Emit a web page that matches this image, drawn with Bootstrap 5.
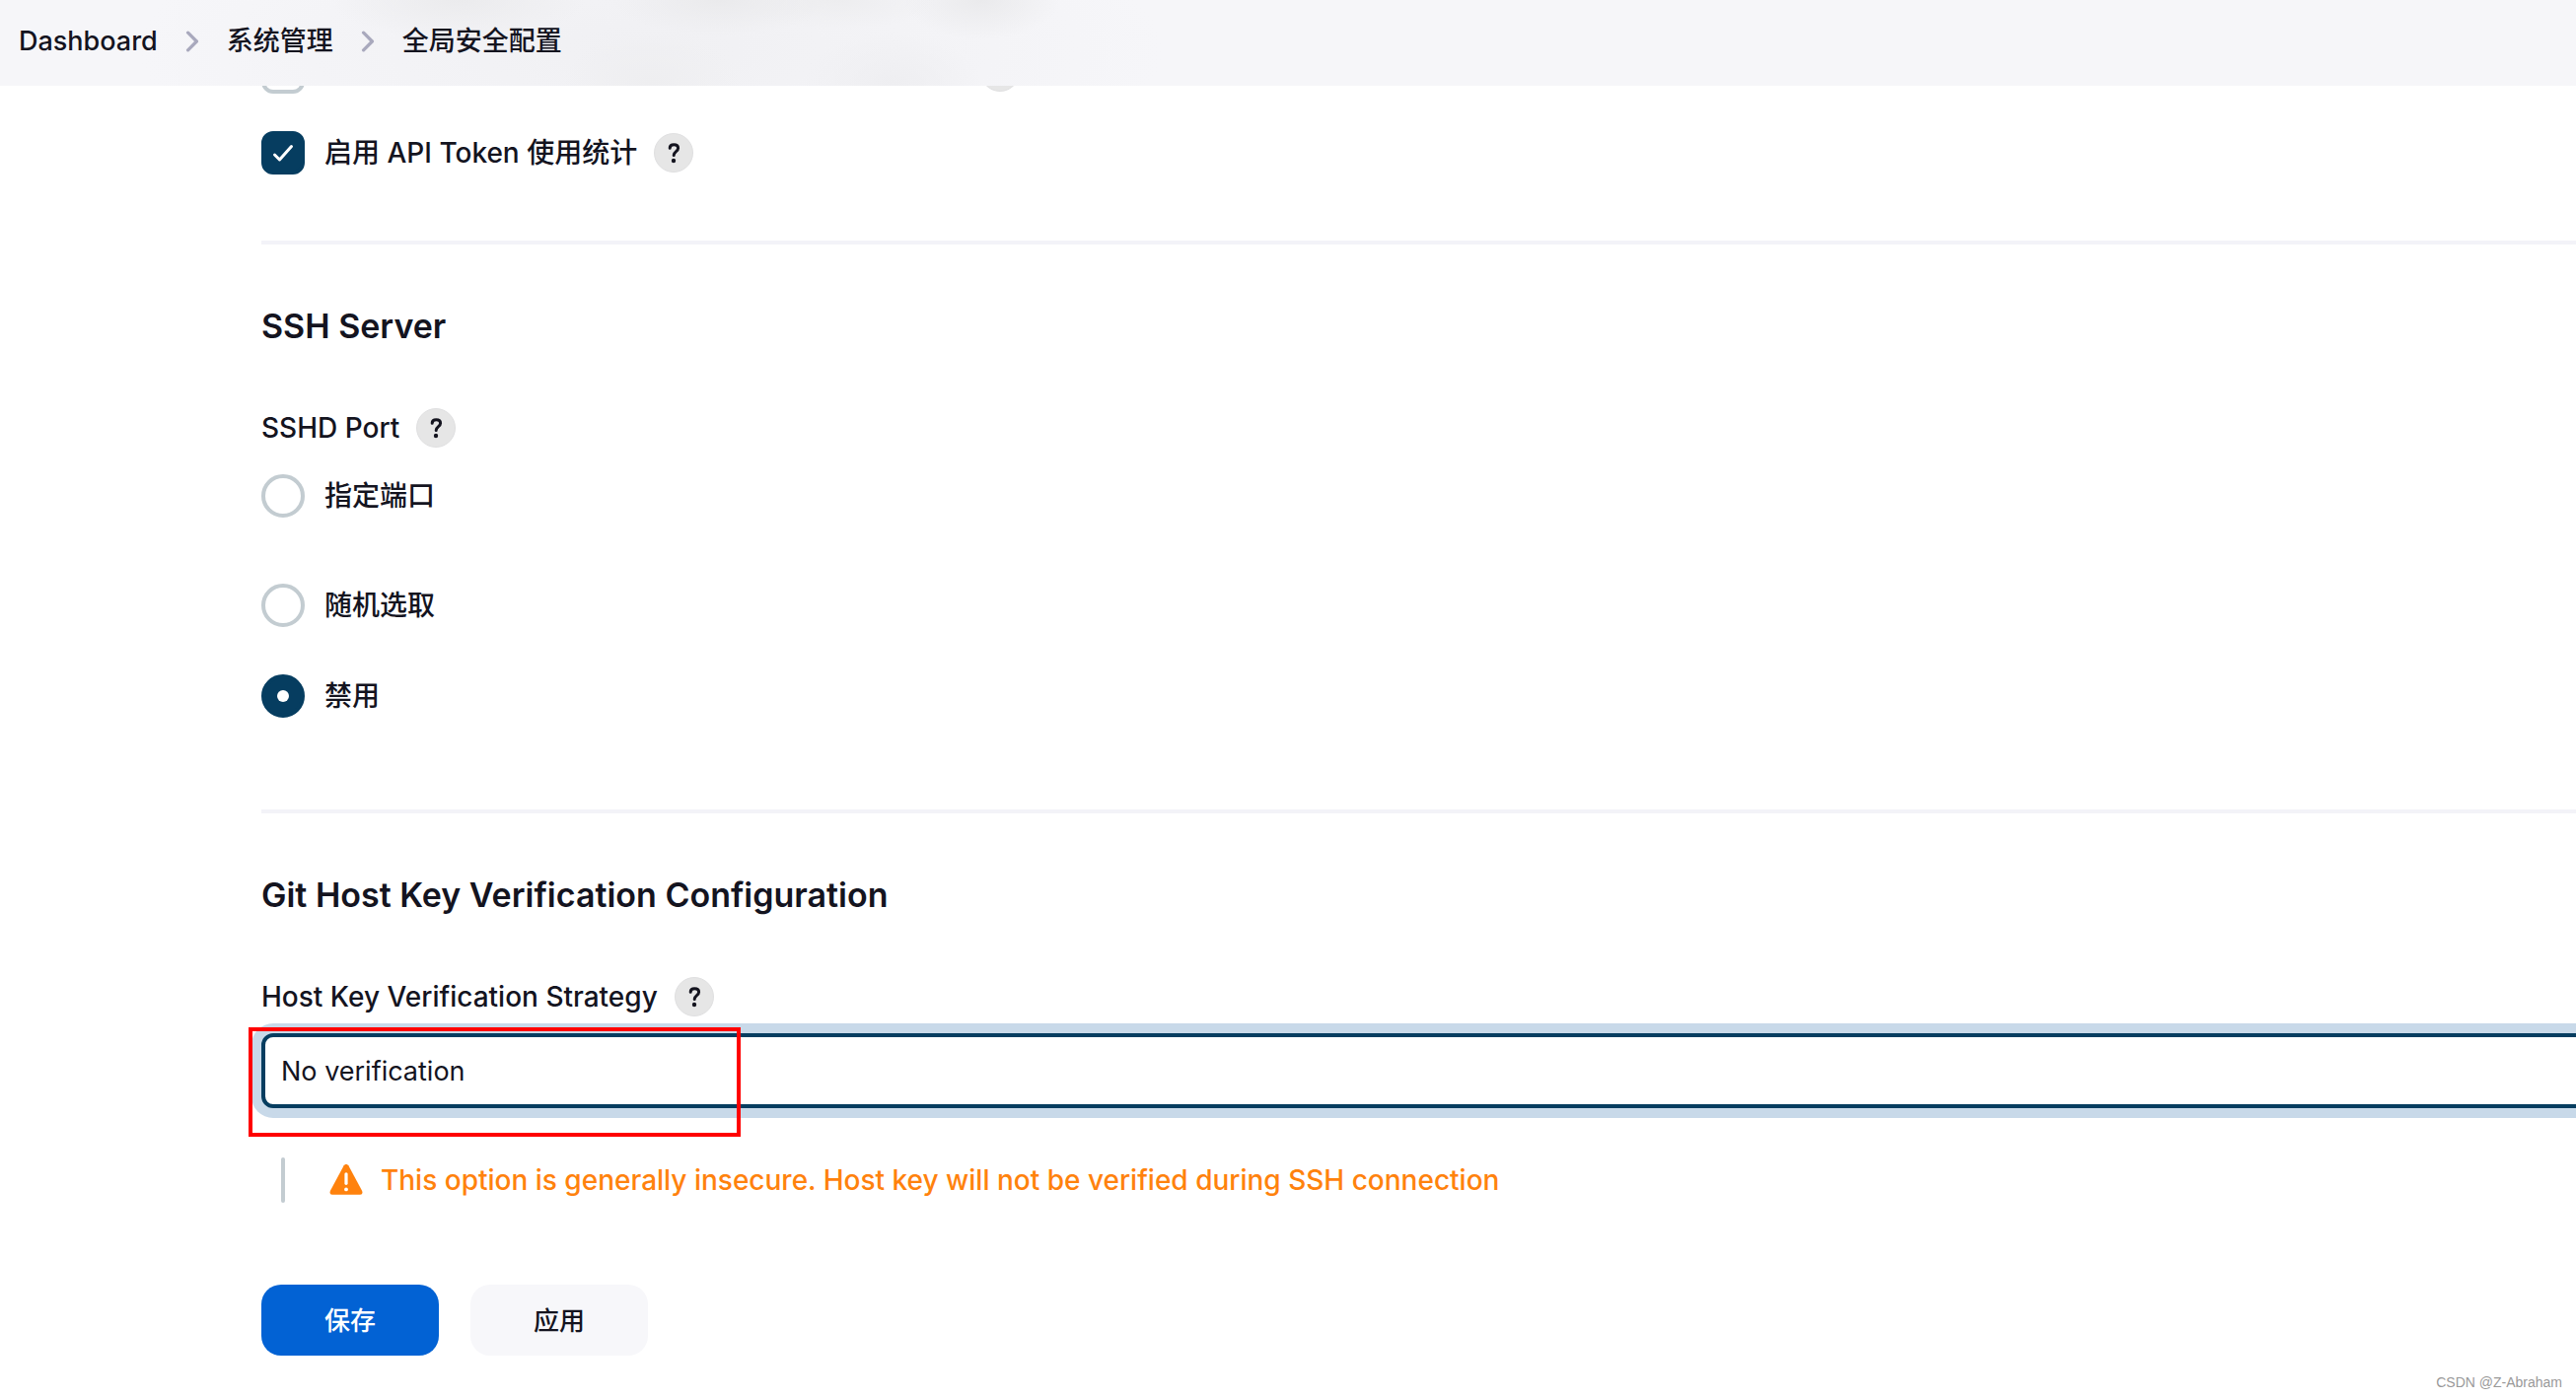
<!DOCTYPE html>
<html lang="zh-CN">
<head>
<meta charset="utf-8">
<meta name="viewport" content="width=device-width, initial-scale=1">
<title>全局安全配置</title>
<link rel="stylesheet" href="https://cdn.jsdelivr.net/npm/bootstrap@5.3.0/dist/css/bootstrap.min.css">
<style>
:root { --ink: #14141f; --accent: #063d60; --line: #c3ccd1; }
body { font-family: Inter, "Noto Sans CJK SC", sans-serif; font-size: 28px; line-height: 40px; font-weight: 500; color: var(--ink); background: #fff; overflow-x: hidden; }
.topbar { height: 87px; padding: 0 19px 3px; font-size: 27px; background:
  radial-gradient(ellipse 130px 40px at 465px 0, #ebebed, transparent),
  radial-gradient(ellipse 110px 36px at 730px 0, #eaeaec, transparent),
  radial-gradient(ellipse 100px 30px at 850px 0, #ededef, transparent),
  radial-gradient(ellipse 80px 40px at 995px 0, #eaeaec, transparent),
  radial-gradient(ellipse 90px 50px at 660px 84px, #eeeef0, transparent),
  radial-gradient(ellipse 90px 50px at 905px 84px, #eeeef1, transparent),
  radial-gradient(ellipse 520px 160px at 660px 50px, #f0f0f3, transparent), #f6f6f9; }
.crumbs { gap: 28px; }
.crumbs a { color: inherit; text-decoration: none; }
.settings { padding: 51px 0 30px 265px; }
.opt-row { height: 44px; gap: 20px; }
.opt-row .form-check-input { width: 44px; height: 44px; margin: 0; border: 4px solid var(--line); flex: none; }
.opt-row .form-check-input[type=checkbox] { border-radius: 12px; }
.opt-row .form-check-input:checked { background-color: var(--accent); border-color: var(--accent); background-size: 44px 44px; background-position: center; }
.opt-row .form-check-input:checked[type=checkbox] { background-image: url("data:image/svg+xml,%3csvg xmlns='http://www.w3.org/2000/svg' viewBox='0 0 44 44'%3e%3cpath d='M13.500 24l5 5L30.500 15.500' fill='none' stroke='%23fff' stroke-width='3' stroke-linecap='round' stroke-linejoin='round'/%3e%3c/svg%3e"); }
.opt-row .form-check-input:checked[type=radio] { background-image: url("data:image/svg+xml,%3csvg xmlns='http://www.w3.org/2000/svg' viewBox='0 0 44 44'%3e%3ccircle cx='22' cy='22' r='6' fill='%23fff'/%3e%3c/svg%3e"); }
.help { width: 40px; height: 40px; padding: 0; border: 1px solid #e0e0e1; border-radius: 50%; background: #e6e6e6; color: var(--ink); flex: none; display: grid; place-content: center; }
.help svg { display: block; }
.under-bar { margin-left: 665px; }
.stats-row { margin-top: 38px; }
.rule { height: 4px; margin: 67px 0 0; border: 0; opacity: 1; background: #f3f3f8; }
.sec-title { font-size: 34px; line-height: 40px; font-weight: 600; margin: 63px 0 63px; }
.field-head { gap: 17px; }
.port-list { padding: 27px 0 26px; }
.port-fixed { margin-bottom: 67px; }
.port-random { margin-bottom: 48px; }
.strategy-box { margin-top: 17px; }
.strategy { appearance: none; width: calc(100% + 20px); height: 76px; padding: 2px 16px 0; border: 4px solid var(--accent); border-radius: 12px; box-shadow: 0 0 0 10px #c8d9e9; font-size: 27px; font-weight: 400; color: var(--ink); background: #fff; }
.callout { position: absolute; left: -13px; top: -6px; width: 499px; height: 111px; border: 4px solid red; pointer-events: none; }
.notice { margin: 50px 0 83px 20px; height: 46px; color: #ff820d; }
.notice .bar { width: 4px; height: 46px; border-radius: 2px; background: var(--line); margin-right: 44px; }
.notice svg { margin-right: 17px; }
.actions { gap: 32px; }
.act { width: 180px; height: 72px; border: 0; border-radius: 20px; font-size: 26px; font-weight: 500; }
.act-save, .act-save:hover { background: #0262d4; color: #fff; }
.act-apply, .act-apply:hover { background: #f7f7fa; color: var(--ink); }
.watermark { position: absolute; right: 14px; bottom: 6px; font: 14px/20px "Liberation Sans", sans-serif; color: #999; }
</style>
</head>
<body>
<svg class="d-none">
  <symbol id="q" viewBox="0 0 40 40"><path d="M16.200 15.200C16.200 12.900 17.800 11.700 20.300 11.700s4.300 1.300 4.300 3.600c0 3.400-4.400 3.200-4.400 7.200" fill="none" stroke="currentColor" stroke-width="3" stroke-linecap="round"/><circle cx="20" cy="28" r="2.200" fill="currentColor"/></symbol>
  <symbol id="chev" viewBox="0 0 12 20"><path d="M2 2l8 8-8 8" fill="none" stroke="#a9a9bd" stroke-width="3" stroke-linecap="round" stroke-linejoin="round"/></symbol>
</svg>
<header class="topbar fixed-top d-flex align-items-center">
  <nav aria-label="breadcrumb">
    <ol class="crumbs list-unstyled d-flex align-items-center m-0">
      <li><a href="#">Dashboard</a></li>
      <li class="d-flex" aria-hidden="true"><svg width="14" height="22"><use href="#chev"/></svg></li>
      <li><a href="#">系统管理</a></li>
      <li class="d-flex" aria-hidden="true"><svg width="14" height="22"><use href="#chev"/></svg></li>
      <li><a href="#">全局安全配置</a></li>
    </ol>
  </nav>
</header>
<main class="settings">
  <form>
    <div class="opt-row d-flex align-items-center">
      <input class="form-check-input" type="checkbox" aria-label="API Token">
      <button type="button" class="help under-bar" aria-label="Help"></button>
    </div>
    <div class="opt-row stats-row d-flex align-items-center">
      <input class="form-check-input" type="checkbox" id="stats" checked>
      <div class="field-head d-flex align-items-center">
        <label for="stats">启用 API Token 使用统计</label>
        <button type="button" class="help" aria-label="Help"><svg width="40" height="40"><use href="#q"/></svg></button>
      </div>
    </div>
    <hr class="rule">
    <section>
      <h2 class="sec-title">SSH Server</h2>
      <div class="field-head d-flex align-items-center">
        <span id="port">SSHD Port</span>
        <button type="button" class="help" aria-label="Help"><svg width="40" height="40"><use href="#q"/></svg></button>
      </div>
      <div class="port-list" role="radiogroup" aria-labelledby="port">
        <div class="opt-row port-fixed d-flex align-items-center"><input class="form-check-input" type="radio" name="port" id="p1"><label for="p1">指定端口</label></div>
        <div class="opt-row port-random d-flex align-items-center"><input class="form-check-input" type="radio" name="port" id="p2"><label for="p2">随机选取</label></div>
        <div class="opt-row d-flex align-items-center"><input class="form-check-input" type="radio" name="port" id="p3" checked><label for="p3">禁用</label></div>
      </div>
    </section>
    <hr class="rule">
    <section>
      <h2 class="sec-title">Git Host Key Verification Configuration</h2>
      <div class="field-head d-flex align-items-center">
        <label for="strategy">Host Key Verification Strategy</label>
        <button type="button" class="help" aria-label="Help"><svg width="40" height="40"><use href="#q"/></svg></button>
      </div>
      <div class="strategy-box position-relative">
        <select class="strategy d-block" id="strategy"><option>No verification</option></select>
        <div class="callout"></div>
      </div>
      <div class="notice d-flex align-items-center">
        <span class="bar"></span>
        <svg width="36" height="34" viewBox="0 0 36 36"><path d="M15.500 2.500Q18-1 20.500 2.500L35 29.500Q36.500 33.500 33 33.500H3Q-.5 33.500 1 29.500Z" fill="#ff820d"/><path d="M18 11.500v10" stroke="#fff" stroke-width="3.400" stroke-linecap="round"/><circle cx="18" cy="28" r="2" fill="#fff"/></svg>
        <span>This option is generally insecure. Host key will not be verified during SSH connection</span>
      </div>
    </section>
    <div class="actions d-flex">
      <button type="submit" class="btn act act-save">保存</button>
      <button type="button" class="btn act act-apply">应用</button>
    </div>
  </form>
</main>
<div class="watermark">CSDN @Z-Abraham</div>
<script src="https://cdn.jsdelivr.net/npm/bootstrap@5.3.0/dist/js/bootstrap.bundle.min.js"></script>
</body>
</html>
